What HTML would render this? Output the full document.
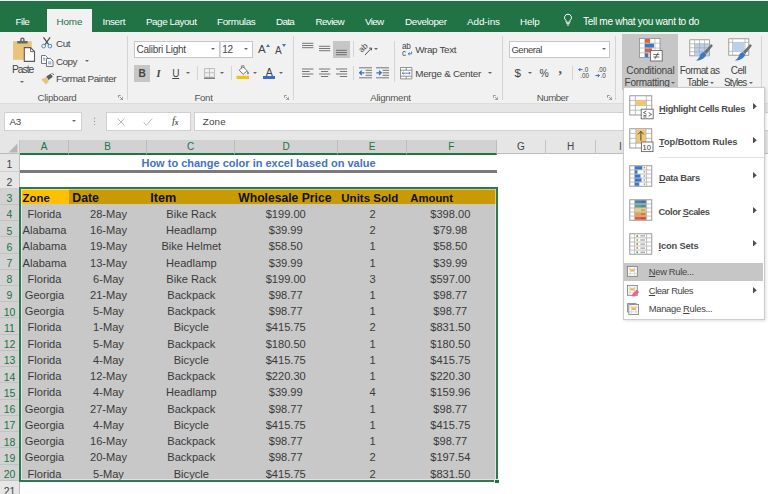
<!DOCTYPE html>
<html>
<head>
<meta charset="utf-8">
<title>Excel - Conditional Formatting</title>
<style>
*{box-sizing:border-box;margin:0;padding:0}
html,body{width:768px;height:494px;overflow:hidden;background:#fff}
body{position:relative;font-family:"Liberation Sans",sans-serif;color:#444}
.a{position:absolute}
.t{position:absolute;white-space:nowrap;line-height:1}
/* top bar */
#top{left:0;top:0;width:768px;height:32.5px;background:#217346}
#top .tab{position:absolute;top:15.5px;font-size:9.9px;letter-spacing:-0.36px;color:#fff;white-space:nowrap;line-height:11px;transform:translateX(-50%)}
#hometab{left:47px;top:9px;width:45px;height:24px;background:#f1f1f1}
/* ribbon */
#ribbon{left:0;top:32px;width:768px;height:71px;background:#f1f1f1}
.rt{position:absolute;white-space:nowrap;font-size:9.9px;letter-spacing:-0.36px;line-height:11.8px;color:#444}
.rtc{transform:translateX(-50%)}
.vsep{position:absolute;width:1px;background:#d4d4d4}
.glabel{position:absolute;top:92px;font-size:9.7px;letter-spacing:-0.36px;line-height:11px;color:#555;white-space:nowrap;transform:translateX(-50%)}
.dd{position:absolute;width:0;height:0;border-left:2.5px solid transparent;border-right:2.5px solid transparent;border-top:2.5px solid #666}
.box{position:absolute;background:#fff;border:1px solid #c8c8c8}
.launch{position:absolute;width:5.3px;height:5.3px;top:94px}
/* formula bar */
#fbar{left:0;top:103px;width:768px;height:37px;background:#e6e6e6}
/* grid */
.ch{position:absolute;top:140px;height:14px;background:#e6e6e6;border-right:1px solid #c4c4c4;border-bottom:1px solid #bdbdbd;font-size:10px;line-height:14.6px;text-align:center;color:#444}
.ch.sel{background:#d2d2d2;color:#217346;border-bottom:2px solid #217346;height:14.6px;border-right:1px solid #bcbcbc}
.rh{position:absolute;left:0;width:20px;background:#e6e6e6;border-bottom:1px solid #cfcfcf;border-right:1px solid #bdbdbd;font-size:10.5px;text-align:center;color:#444;display:flex;align-items:center;justify-content:center;line-height:1;padding-top:4.2px}
.rh.sel{background:#d2d2d2;color:#217346;border-right:1.5px solid #217346;border-bottom:1px solid #c2c2c2}
.c{position:absolute;height:16.2px;line-height:18.2px;font-size:11.1px;text-align:center;color:#3a3a3a;white-space:nowrap}
.h{position:absolute;height:16.2px;line-height:18.4px;font-size:12.1px;font-weight:bold;color:#111;white-space:nowrap}
/* menu */
#menu{left:622.6px;top:87.4px;width:142px;height:232.4px;background:#fff;border:1px solid #cbcbcb;box-shadow:1px 1px 3px rgba(0,0,0,.13)}
.mi{position:absolute;left:35px;font-size:9.3px;font-weight:bold;color:#4c4c4c;white-space:nowrap;line-height:11px}
.ms{position:absolute;left:25px;font-size:9.4px;color:#444;white-space:nowrap;line-height:11px}
.arr{position:absolute;width:0;height:0;border-top:2.8px solid transparent;border-bottom:2.8px solid transparent;border-left:3.4px solid #444}
u{text-decoration:underline;text-underline-offset:1px}
</style>
</head>
<body>
<!-- ===== TOP BAR ===== -->
<div id="top" class="a">
  <div class="a" style="left:0;top:0;width:768px;height:1.4px;background:#f2f5f2"></div>
  <div id="hometab" class="a"></div>
  <div class="tab" style="left:22.4px;letter-spacing:-0.581px">File</div>
  <div class="tab" style="left:69.4px;color:#217346;letter-spacing:-0.187px">Home</div>
  <div class="tab" style="left:113.8px;letter-spacing:-0.384px">Insert</div>
  <div class="tab" style="left:171.2px;letter-spacing:-0.451px">Page Layout</div>
  <div class="tab" style="left:236.2px;letter-spacing:-0.333px">Formulas</div>
  <div class="tab" style="left:285px;letter-spacing:-0.715px">Data</div>
  <div class="tab" style="left:329.8px;letter-spacing:-0.646px">Review</div>
  <div class="tab" style="left:374.2px;letter-spacing:-0.684px">View</div>
  <div class="tab" style="left:425.8px;letter-spacing:-0.391px">Developer</div>
  <div class="tab" style="left:483.5px;letter-spacing:-0.070px">Add-ins</div>
  <div class="tab" style="left:529.8px;letter-spacing:-0.204px">Help</div>
  <svg class="a" style="left:563px;top:13px" width="10" height="14" viewBox="0 0 10 14"><path d="M5 1.2a3.4 3.4 0 0 0-2 6.2v1.8h4V7.4a3.4 3.4 0 0 0-2-6.2z" fill="none" stroke="#fff" stroke-width="1"/><path d="M3.4 10.6h3.2M3.8 12h2.4" stroke="#fff" stroke-width="0.9"/></svg>
  <div class="tab" style="left:641px;font-size:10.1px;letter-spacing:-0.317px">Tell me what you want to do</div>
</div>

<!-- ===== RIBBON ===== -->
<div id="ribbon" class="a">
  <!-- Clipboard group (coords relative to ribbon top=32) -->
  <svg class="a" style="left:11px;top:5px" width="26" height="26" viewBox="0 0 26 26">
    <rect x="2" y="4.2" width="18.8" height="18.6" fill="#eac47c"/>
    <path d="M6.2 6.6V4h2.9V2.9a2.3 2.3 0 0 1 4.6 0V4h2.9v2.6z" fill="#666"/>
    <circle cx="11.4" cy="3" r="0.9" fill="#f1f1f1"/>
    <path d="M13.3 10.6h6.2l4 4V24.4h-10.2z" fill="#fff" stroke="#5c5c5c" stroke-width="1.1"/>
    <path d="M19.5 10.6v4h4" fill="none" stroke="#5c5c5c" stroke-width="0.9"/>
  </svg>
  <div class="rt rtc" style="left:22.6px;top:32.2px;font-size:10.3px;letter-spacing:-1.026px">Paste</div>
  <div class="dd" style="left:19.5px;top:49px"></div>
  <!-- cut -->
  <svg class="a" style="left:41.3px;top:5px" width="11.6" height="11.6" viewBox="0 0 13 13">
    <path d="M2.8 0.4L8.6 8.6M10.2 0.4L4.4 8.6" stroke="#4c4c4c" stroke-width="1.35" fill="none"/>
    <circle cx="3" cy="10.2" r="2.1" fill="none" stroke="#4a86cc" stroke-width="1.1"/>
    <circle cx="10" cy="10.2" r="2.1" fill="none" stroke="#4a86cc" stroke-width="1.1"/>
  </svg>
  <div class="rt" style="left:56px;top:5.5px;letter-spacing:-0.459px">Cut</div>
  <!-- copy -->
  <svg class="a" style="left:40.5px;top:23px" width="13" height="12" viewBox="0 0 13 12">
    <path d="M0.5 0.5h4l2 2v6h-6z" fill="#fff" stroke="#666" stroke-width="0.9"/>
    <path d="M2 3.3h2.4M2 5h2.4" stroke="#3c78c2" stroke-width="0.8"/>
    <path d="M5.5 3.5h4l2.5 2.5v5.5h-6.5z" fill="#fff" stroke="#666" stroke-width="0.9"/>
    <path d="M7 7h3.4M7 8.8h3.4" stroke="#3c78c2" stroke-width="0.8"/>
  </svg>
  <div class="rt" style="left:56px;top:24px;letter-spacing:-0.516px">Copy</div>
  <div class="dd" style="left:84.7px;top:27.5px"></div>
  <!-- format painter -->
  <svg class="a" style="left:41px;top:40.5px" width="13" height="12" viewBox="0 0 13 12">
    <path d="M0.2 6.4L5 4l3 4.2L5 11.4z" fill="#eac47c"/>
    <path d="M5.2 3.6L9.6 0.8l2.2 3L7.6 7z" fill="#5a5a5a"/>
    <path d="M10.4 0.4l1.6-0.4M11.8 1.8l1.2-0.6" stroke="#5a5a5a" stroke-width="0.9" fill="none"/>
  </svg>
  <div class="rt" style="left:56px;top:41px;letter-spacing:-0.366px">Format Painter</div>
  <div class="glabel" style="left:57px;top:59.5px;letter-spacing:-0.286px">Clipboard</div>
  <svg class="launch" style="left:118px;top:62.5px" viewBox="0 0 6 6"><path d="M0.5 3V0.5H3M5.5 2v3.5H2M2.5 2.5l2.5 2.5" fill="none" stroke="#777" stroke-width="0.9"/></svg>
  <div class="vsep" style="left:127px;top:4px;height:64px"></div>

  <!-- Font group -->
  <div class="box" style="left:134px;top:9px;width:86px;height:17px"></div>
  <div class="box" style="left:220px;top:9px;width:33px;height:17px;border-left-color:#d8d8d8"></div>
  <div class="rt" style="left:136.5px;top:12px;font-size:10.00px;letter-spacing:-0.270px">Calibri Light</div>
  <div class="dd" style="left:211px;top:16px"></div>
  <div class="rt" style="left:222.3px;top:12px;font-size:10.00px">12</div>
  <div class="dd" style="left:244.2px;top:16px"></div>
  <div class="rt" style="left:258px;top:10.5px;font-size:11.5px;line-height:13px">A</div>
  <svg class="a" style="left:265.5px;top:11.5px" width="4" height="3" viewBox="0 0 4 3"><path d="M0 3L2 0L4 3z" fill="#3c78c2"/></svg>
  <div class="rt" style="left:275px;top:12px;font-size:10px;line-height:13px">A</div>
  <svg class="a" style="left:281.5px;top:11.5px" width="4" height="3" viewBox="0 0 4 3"><path d="M0 0L2 3L4 0z" fill="#3c78c2"/></svg>
  <div class="a" style="left:133.6px;top:32.5px;width:16.8px;height:17.2px;background:#c6c6c6"></div>
  <div class="rt rtc" style="left:142px;top:36px;font-weight:bold;font-size:10.11px">B</div>
  <div class="rt rtc" style="left:158.3px;top:36px;font-style:italic;font-size:10.32px;font-family:'Liberation Serif',serif;font-weight:bold">I</div>
  <div class="rt rtc" style="left:175.7px;top:36px;font-size:10.11px;text-decoration:underline;text-underline-offset:1.2px">U</div>
  <div class="dd" style="left:186.4px;top:40px"></div>
  <div class="vsep" style="left:197px;top:33.6px;height:14.5px"></div>
  <svg class="a" style="left:204px;top:35.5px" width="11" height="11" viewBox="0 0 11 11">
    <path d="M0.5 0.5h10v8.5h-10zM5.5 0.5v8.5M0.5 4.8h10" fill="none" stroke="#b9b9b9" stroke-width="0.9"/>
    <path d="M0 10.2h11" stroke="#555" stroke-width="1.1"/>
  </svg>
  <div class="dd" style="left:220px;top:40px"></div>
  <div class="vsep" style="left:230.6px;top:33.6px;height:14.5px"></div>
  <svg class="a" style="left:236px;top:33px" width="15" height="15" viewBox="0 0 15 15">
    <rect x="0.6" y="10.8" width="12.4" height="3.2" fill="#f5c211"/>
    <path d="M3.2 5.2L7 1.6l4 4.2-3.8 3.6z" fill="#fff" stroke="#666" stroke-width="0.9"/>
    <path d="M5.4 3.6V1.4a1.3 1.3 0 0 1 2.6 0v1.4" fill="none" stroke="#666" stroke-width="0.8"/>
    <path d="M11.4 5.4c1 1.4 1.8 2.4 1.4 3.4-0.4 0.8-1.6 0.6-1.6-0.4z" fill="#3c78c2"/>
  </svg>
  <div class="dd" style="left:253.2px;top:40px"></div>
  <div class="rt rtc" style="left:269.2px;top:33.5px;font-size:10.6px;line-height:12px">A</div>
  <div class="a" style="left:263px;top:43.8px;width:12px;height:3.2px;background:#3a6fc4"></div>
  <div class="dd" style="left:279.4px;top:40px"></div>
  <div class="glabel" style="left:203.5px;top:59.5px">Font</div>
  <svg class="launch" style="left:283.5px;top:62.5px" viewBox="0 0 6 6"><path d="M0.5 3V0.5H3M5.5 2v3.5H2M2.5 2.5l2.5 2.5" fill="none" stroke="#777" stroke-width="0.9"/></svg>
  <div class="vsep" style="left:292.6px;top:4px;height:64px"></div>

  <!-- Alignment group -->
  <svg class="a" style="left:302px;top:10px" width="12" height="8" viewBox="0 0 12 8"><path d="M0 1.3h11.4M0 3.5h11.4M0 5.7h11.4" stroke="#666" stroke-width="0.9"/></svg>
  <svg class="a" style="left:319px;top:13.4px" width="12" height="8" viewBox="0 0 12 8"><path d="M0 1.3h11.2M0 3.5h11.2M0 5.7h11.2" stroke="#666" stroke-width="0.9"/></svg>
  <div class="a" style="left:333px;top:8.6px;width:17.2px;height:17.6px;background:#c6c6c6"></div>
  <svg class="a" style="left:336.2px;top:17.2px" width="12" height="8" viewBox="0 0 12 8"><path d="M0 1.3h10.8M0 3.5h10.8M0 5.7h10.8" stroke="#666" stroke-width="0.9"/></svg>
  <div class="vsep" style="left:352.8px;top:9px;height:16px"></div>
  <svg class="a" style="left:358.6px;top:8.6px" width="15" height="15" viewBox="0 0 15 15">
    <text x="0" y="0" font-family="Liberation Sans, sans-serif" font-size="8.4" fill="#444" transform="translate(2.7 12) rotate(-45)">ab</text>
    <path d="M6 14L12.6 7M12.6 7l-2.4 0.2M12.6 7l-0.2 2.4" stroke="#555" stroke-width="1" fill="none"/>
  </svg>
  <div class="dd" style="left:374.3px;top:16px"></div>
  <svg class="a" style="left:302px;top:36px" width="12" height="10" viewBox="0 0 12 10"><path d="M0 1h11.4M0 3.5h7.6M0 6h11.4M0 8.5h7.6" stroke="#666" stroke-width="0.9"/></svg>
  <svg class="a" style="left:319px;top:36px" width="12" height="10" viewBox="0 0 12 10"><path d="M0 1h11.2M2 3.5h7.2M0 6h11.2M2 8.5h7.2" stroke="#666" stroke-width="0.9"/></svg>
  <svg class="a" style="left:336px;top:36px" width="12" height="10" viewBox="0 0 12 10"><path d="M0 1h11.2M3.8 3.5h7.4M0 6h11.2M3.8 8.5h7.4" stroke="#666" stroke-width="0.9"/></svg>
  <div class="vsep" style="left:352.8px;top:33.6px;height:14.5px"></div>
  <svg class="a" style="left:359px;top:35px" width="14" height="12" viewBox="0 0 14 12">
    <path d="M0 0.8h13M6.6 3.3h6.4M6.6 5.8h6.4M6.6 8.3h6.4M0 10.8h13" stroke="#666" stroke-width="0.9"/>
    <path d="M5.4 5.8H0.8M2.8 3.6L0.6 5.8l2.2 2.2" stroke="#2f6fbe" stroke-width="1.2" fill="none"/>
  </svg>
  <svg class="a" style="left:376px;top:35px" width="14" height="12" viewBox="0 0 14 12">
    <path d="M0 0.8h13M6.6 3.3h6.4M6.6 5.8h6.4M6.6 8.3h6.4M0 10.8h13" stroke="#666" stroke-width="0.9"/>
    <path d="M0.4 5.8H5M3 3.6l2.2 2.2L3 8" stroke="#2f6fbe" stroke-width="1.2" fill="none"/>
  </svg>
  <div class="vsep" style="left:394.4px;top:8.5px;height:41px"></div>
  <!-- wrap text -->
  <svg class="a" style="left:402.2px;top:10.5px" width="12" height="14" viewBox="0 0 12 14">
    <text x="0" y="6.4" font-family="Liberation Sans, sans-serif" font-size="8.2" fill="#444" letter-spacing="-0.3">ab</text>
    <text x="0" y="12.8" font-family="Liberation Sans, sans-serif" font-size="8.2" fill="#444">c</text>
    <path d="M9.6 8.6v2.2H6.2M7.6 9.6L6.2 10.8l1.4 1.2" stroke="#2f6fbe" stroke-width="0.9" fill="none"/>
  </svg>
  <div class="rt" style="left:415.2px;top:12px;letter-spacing:-0.344px">Wrap Text</div>
  <svg class="a" style="left:400px;top:34.5px" width="13" height="13" viewBox="0 0 13 13">
    <path d="M0.5 0.5h11.4v11.4H0.5zM0.5 3.2h11.4M0.5 9.2h11.4M6.2 0.5v2.7M6.2 9.2v2.7" fill="#fff" stroke="#858585" stroke-width="0.9"/>
    <path d="M2.2 6.2h8M3.6 4.9L2.2 6.2l1.4 1.3M8.8 4.9l1.4 1.3-1.4 1.3" stroke="#2f6fbe" stroke-width="0.8" fill="none"/>
  </svg>
  <div class="rt" style="left:415.2px;top:36px;letter-spacing:-0.279px">Merge &amp; Center</div>
  <div class="dd" style="left:488.4px;top:40px"></div>
  <div class="glabel" style="left:390.5px;top:59.5px;letter-spacing:-0.309px">Alignment</div>
  <svg class="launch" style="left:493px;top:62.5px" viewBox="0 0 6 6"><path d="M0.5 3V0.5H3M5.5 2v3.5H2M2.5 2.5l2.5 2.5" fill="none" stroke="#777" stroke-width="0.9"/></svg>
  <div class="vsep" style="left:502.4px;top:4px;height:64px"></div>

  <!-- Number group -->
  <div class="box" style="left:508.6px;top:9px;width:101.4px;height:17px"></div>
  <div class="rt" style="left:511.4px;top:12px;font-size:9.57px;letter-spacing:-0.503px">General</div>
  <div class="dd" style="left:601.9px;top:16px"></div>
  <div class="rt rtc" style="left:517.6px;top:34px;font-size:11.6px;line-height:13px">$</div>
  <div class="dd" style="left:527.6px;top:40px"></div>
  <div class="rt rtc" style="left:544px;top:34.5px;font-size:10.4px;line-height:13px">%</div>
  <div class="rt rtc" style="left:560px;top:29.5px;font-size:14px;line-height:14px;font-weight:bold;font-family:'Liberation Serif',serif;color:#555">,</div>
  <div class="vsep" style="left:572.4px;top:33.6px;height:14.5px"></div>
  <svg class="a" style="left:578px;top:35px" width="12" height="12" viewBox="0 0 12 12">
    <path d="M4.6 2.6H0.8M2.4 1L0.8 2.6l1.6 1.6" stroke="#2f6fbe" stroke-width="1" fill="none"/>
    <text x="5" y="5" font-family="Liberation Sans, sans-serif" font-size="6.3" fill="#444">.0</text>
    <text x="2.2" y="10.6" font-family="Liberation Sans, sans-serif" font-size="6.3" fill="#444">.00</text>
  </svg>
  <svg class="a" style="left:595px;top:35px" width="12" height="12" viewBox="0 0 12 12">
    <text x="2.4" y="5" font-family="Liberation Sans, sans-serif" font-size="6.3" fill="#444">.00</text>
    <path d="M0.4 8.6H4.4M2.8 7L4.4 8.6 2.8 10.2" stroke="#2f6fbe" stroke-width="1" fill="none"/>
    <text x="5.6" y="10.6" font-family="Liberation Sans, sans-serif" font-size="6.3" fill="#444">.0</text>
  </svg>
  <div class="glabel" style="left:552.5px;top:59.5px;letter-spacing:-0.526px">Number</div>
  <svg class="launch" style="left:607px;top:62.5px" viewBox="0 0 6 6"><path d="M0.5 3V0.5H3M5.5 2v3.5H2M2.5 2.5l2.5 2.5" fill="none" stroke="#777" stroke-width="0.9"/></svg>
  <div class="vsep" style="left:614.6px;top:4px;height:64px"></div>

  <!-- Styles group -->
  <div class="a" style="left:622.2px;top:2.4px;width:55.6px;height:55.6px;background:#c6c6c6"></div>
  <svg class="a" style="left:639px;top:6px" width="25" height="24" viewBox="0 0 25 24">
    <rect x="0.5" y="0.5" width="20.5" height="19" fill="#fff" stroke="#8a8a8a" stroke-width="0.8"/>
    <path d="M0.5 5.2h20.5M0.5 10h20.5M0.5 14.8h20.5M5.6 0.5v19M10.8 0.5v19M16 0.5v19" stroke="#b0b0b0" stroke-width="0.7" fill="none"/>
    <rect x="6" y="1" width="5" height="3.8" fill="#e0603a"/>
    <rect x="6" y="5.6" width="9" height="4" fill="#3c78c2"/>
    <rect x="6" y="10.4" width="7" height="4" fill="#e0603a"/>
    <rect x="6" y="15.2" width="3.4" height="4" fill="#3c78c2"/>
    <rect x="11.6" y="12.6" width="11.6" height="10.4" fill="#fff" stroke="#666" stroke-width="0.9"/>
    <path d="M14.4 16.6h6M14.4 19h6M19.2 14.6l-3.4 6.6" stroke="#444" stroke-width="0.8" fill="none"/>
  </svg>
  <div class="rt rtc" style="left:650.4px;top:32.7px;font-size:10.11px;letter-spacing:-0.219px">Conditional</div>
  <div class="rt" style="left:624.6px;top:44.9px;font-size:10.00px;letter-spacing:-0.290px">Formatting</div>
  <div class="dd" style="left:671px;top:49.6px"></div>
  <svg class="a" style="left:688.5px;top:7px" width="27" height="24" viewBox="0 0 27 24">
    <rect x="0.8" y="0.8" width="19.6" height="16" fill="#fff" stroke="#8a8a8a" stroke-width="0.8"/>
    <rect x="5.6" y="4.8" width="14.6" height="11.8" fill="#b9d0ec"/>
    <path d="M0.8 4.8h19.6M0.8 8.8h19.6M0.8 12.8h19.6M5.6 0.8v16M10.6 0.8v16M15.6 0.8v16" stroke="#a8a8a8" stroke-width="0.7" fill="none"/>
    <path d="M22.2 5l1.7 1.7-6.7 8.3-2.4-2z" fill="#707070"/>
    <path d="M14.6 13l2.6 2.4c-0.6 3-3.6 5.6-10.4 6.2 2.4-1.6 3.4-3 4.2-5.2 0.6-1.8 2-3 3.6-3.4z" fill="#3c78c2"/>
  </svg>
  <div class="rt rtc" style="left:699.5px;top:32.7px;font-size:10.00px;letter-spacing:-0.602px">Format as</div>
  <div class="rt" style="left:686.8px;top:44.9px;font-size:10.00px;letter-spacing:-0.522px">Table</div>
  <div class="dd" style="left:710px;top:49.6px"></div>
  <svg class="a" style="left:727.5px;top:6px" width="27" height="25" viewBox="0 0 27 25">
    <rect x="0.8" y="0.8" width="20" height="16.4" fill="#fff" stroke="#8a8a8a" stroke-width="0.8"/>
    <path d="M0.8 4.4h20M0.8 13.4h20M4.6 0.8v16.4M17 0.8v16.4" stroke="#a8a8a8" stroke-width="0.7" fill="none"/>
    <rect x="5" y="4.8" width="11.6" height="8.2" fill="#b9d0ec"/>
    <path d="M22.2 6l1.7 1.7-6.7 8.3-2.4-2z" fill="#707070"/>
    <path d="M14.6 14l2.6 2.4c-0.6 3-3.6 5.6-10.4 6.2 2.4-1.6 3.4-3 4.2-5.2 0.6-1.8 2-3 3.6-3.4z" fill="#3c78c2"/>
  </svg>
  <div class="rt rtc" style="left:738.4px;top:32.7px;font-size:10.00px;letter-spacing:-0.509px">Cell</div>
  <div class="rt" style="left:723.9px;top:44.9px;font-size:10.00px;letter-spacing:-0.756px">Styles</div>
  <div class="dd" style="left:748.6px;top:49.6px"></div>
  <div class="vsep" style="left:761.2px;top:4px;height:52px"></div>

</div>

<!-- ===== FORMULA BAR ===== -->
<div id="fbar" class="a">
  <!-- coords relative to fbar top=103 -->
  <div class="a" style="left:0;top:0;width:768px;height:1px;background:#dcdcdc"></div>
  <div class="box" style="left:3.8px;top:8.8px;width:78.6px;height:19.6px;border-color:#d0d0d0"></div>
  <div class="rt" style="left:9.4px;top:12.7px;font-size:9.8px;letter-spacing:-0.068px">A3</div>
  <div class="dd" style="left:72px;top:17px"></div>
  <svg class="a" style="left:93px;top:14px" width="3" height="9" viewBox="0 0 3 9"><circle cx="1.5" cy="1.2" r="0.7" fill="#999"/><circle cx="1.5" cy="4.4" r="0.7" fill="#999"/><circle cx="1.5" cy="7.6" r="0.7" fill="#999"/></svg>
  <div class="box" style="left:106.2px;top:8.8px;width:84.6px;height:19.6px;border-color:#d0d0d0"></div>
  <svg class="a" style="left:116.5px;top:14.5px" width="8" height="8" viewBox="0 0 8 8"><path d="M0.6 0.6l6.8 6.8M7.4 0.6L0.6 7.4" stroke="#b0b0b0" stroke-width="0.9"/></svg>
  <svg class="a" style="left:143px;top:14.5px" width="10" height="8" viewBox="0 0 10 8"><path d="M0.6 4.6l2.8 2.6L9.2 0.6" stroke="#b0b0b0" stroke-width="0.9" fill="none"/></svg>
  <div class="rt" style="left:172px;top:11px;font-size:11px;font-style:italic;font-family:'Liberation Serif',serif;color:#4a4a4a;line-height:12px">f<span style="font-size:7.6px;font-weight:bold;position:relative;top:0.6px">x</span></div>
  <div class="box" style="left:193.6px;top:8.8px;width:580px;height:19.6px;border-color:#d0d0d0"></div>
  <div class="rt" style="left:202.8px;top:12.7px;font-size:9.9px;letter-spacing:0.120px">Zone</div>

</div>

<!-- ===== GRID ===== -->
<div id="grid" class="a" style="left:0;top:0;width:768px;height:494px;pointer-events:none">
  <!-- corner -->
  <div class="a" style="left:0;top:140px;width:20px;height:14px;background:#e6e6e6;border-right:1px solid #c4c4c4;border-bottom:1px solid #bdbdbd"></div>
  <svg class="a" style="left:8px;top:143px" width="10" height="10" viewBox="0 0 10 10"><path d="M9.5 0.5V9.5H0.5z" fill="#b5b5b5"/></svg>
  <div class="a" style="left:646px;top:140px;width:122px;height:14px;background:#e6e6e6;border-bottom:1px solid #bdbdbd"></div>
<div class="ch sel" style="left:20px;width:49px">A</div>
<div class="ch sel" style="left:69px;width:78px">B</div>
<div class="ch sel" style="left:147px;width:88px">C</div>
<div class="ch sel" style="left:235px;width:103px">D</div>
<div class="ch sel" style="left:338px;width:69px">E</div>
<div class="ch sel" style="left:407px;width:89.60000000000002px">F</div>
<div class="ch" style="left:496.6px;width:49.39999999999998px">G</div>
<div class="ch" style="left:546px;width:50px">H</div>
<div class="ch" style="left:596px;width:50px">I</div>
<div class="rh" style="top:154px;height:18px">1</div>
<div class="rh" style="top:172px;height:16.6px">2</div>
<div class="rh sel" style="top:188.60px;height:16.235px">3</div>
<div class="rh sel" style="top:204.83px;height:16.235px">4</div>
<div class="rh sel" style="top:221.07px;height:16.235px">5</div>
<div class="rh sel" style="top:237.31px;height:16.235px">6</div>
<div class="rh sel" style="top:253.54px;height:16.235px">7</div>
<div class="rh sel" style="top:269.77px;height:16.235px">8</div>
<div class="rh sel" style="top:286.01px;height:16.235px">9</div>
<div class="rh sel" style="top:302.25px;height:16.235px">10</div>
<div class="rh sel" style="top:318.48px;height:16.235px">11</div>
<div class="rh sel" style="top:334.72px;height:16.235px">12</div>
<div class="rh sel" style="top:350.95px;height:16.235px">13</div>
<div class="rh sel" style="top:367.18px;height:16.235px">14</div>
<div class="rh sel" style="top:383.42px;height:16.235px">15</div>
<div class="rh sel" style="top:399.65px;height:16.235px">16</div>
<div class="rh sel" style="top:415.89px;height:16.235px">17</div>
<div class="rh sel" style="top:432.12px;height:16.235px">18</div>
<div class="rh sel" style="top:448.36px;height:16.235px">19</div>
<div class="rh sel" style="top:464.60px;height:16.235px">20</div>
<div class="rh" style="top:481.43px;height:16.235px">21</div>
  <!-- title row -->
  <div class="t" style="left:20px;top:154px;width:476px;height:17px;line-height:19.6px;text-align:center;font-size:11px;font-weight:bold;color:#4472c4;padding-left:1px">How to change color in excel based on value</div>
  <div class="a" style="left:20px;top:170.2px;width:477px;height:2.6px;background:#7a7a7a"></div>
  <!-- selection fill -->
  <div class="a" style="left:20.4px;top:188.6px;width:475.4px;height:291.2px;background:#c8c8c8"></div>
  <div class="a" style="left:20.4px;top:188.6px;width:475.4px;height:15.8px;background:#c89a04"></div>
  <div class="a" style="left:20.4px;top:188.6px;width:48.6px;height:15.8px;background:#ffc000"></div>
<div class="h" style="left:22.6px;top:188.60px;width:46.4px;font-size:11.4px">Zone</div>
<div class="h" style="left:72.3px;top:188.60px;width:74.7px;font-size:12.3px">Date</div>
<div class="h" style="left:150.3px;top:188.60px;width:84.7px;font-size:12.6px">Item</div>
<div class="h" style="left:238.3px;top:188.60px;width:99.7px;font-size:12.15px">Wholesale Price</div>
<div class="h" style="left:341.3px;top:188.60px;width:65.7px;font-size:11.5px">Units Sold</div>
<div class="h" style="left:410.3px;top:188.60px;width:86.30000000000003px;font-size:11.3px">Amount</div>
<div class="c" style="left:20px;top:204.83px;width:49px">Florida</div>
<div class="c" style="left:69.5px;top:204.83px;width:78px">28-May</div>
<div class="c" style="left:147.3px;top:204.83px;width:88px">Bike Rack</div>
<div class="c" style="left:234.2px;top:204.83px;width:103px">$199.00</div>
<div class="c" style="left:338px;top:204.83px;width:69px">2</div>
<div class="c" style="left:405.5px;top:204.83px;width:89.60000000000002px">$398.00</div>
<div class="c" style="left:20px;top:221.07px;width:49px">Alabama</div>
<div class="c" style="left:69.5px;top:221.07px;width:78px">16-May</div>
<div class="c" style="left:147.3px;top:221.07px;width:88px">Headlamp</div>
<div class="c" style="left:234.2px;top:221.07px;width:103px">$39.99</div>
<div class="c" style="left:338px;top:221.07px;width:69px">2</div>
<div class="c" style="left:405.5px;top:221.07px;width:89.60000000000002px">$79.98</div>
<div class="c" style="left:20px;top:237.31px;width:49px">Alabama</div>
<div class="c" style="left:69.5px;top:237.31px;width:78px">19-May</div>
<div class="c" style="left:147.3px;top:237.31px;width:88px">Bike Helmet</div>
<div class="c" style="left:234.2px;top:237.31px;width:103px">$58.50</div>
<div class="c" style="left:338px;top:237.31px;width:69px">1</div>
<div class="c" style="left:405.5px;top:237.31px;width:89.60000000000002px">$58.50</div>
<div class="c" style="left:20px;top:253.54px;width:49px">Alabama</div>
<div class="c" style="left:69.5px;top:253.54px;width:78px">13-May</div>
<div class="c" style="left:147.3px;top:253.54px;width:88px">Headlamp</div>
<div class="c" style="left:234.2px;top:253.54px;width:103px">$39.99</div>
<div class="c" style="left:338px;top:253.54px;width:69px">1</div>
<div class="c" style="left:405.5px;top:253.54px;width:89.60000000000002px">$39.99</div>
<div class="c" style="left:20px;top:269.77px;width:49px">Florida</div>
<div class="c" style="left:69.5px;top:269.77px;width:78px">6-May</div>
<div class="c" style="left:147.3px;top:269.77px;width:88px">Bike Rack</div>
<div class="c" style="left:234.2px;top:269.77px;width:103px">$199.00</div>
<div class="c" style="left:338px;top:269.77px;width:69px">3</div>
<div class="c" style="left:405.5px;top:269.77px;width:89.60000000000002px">$597.00</div>
<div class="c" style="left:20px;top:286.01px;width:49px">Georgia</div>
<div class="c" style="left:69.5px;top:286.01px;width:78px">21-May</div>
<div class="c" style="left:147.3px;top:286.01px;width:88px">Backpack</div>
<div class="c" style="left:234.2px;top:286.01px;width:103px">$98.77</div>
<div class="c" style="left:338px;top:286.01px;width:69px">1</div>
<div class="c" style="left:405.5px;top:286.01px;width:89.60000000000002px">$98.77</div>
<div class="c" style="left:20px;top:302.25px;width:49px">Georgia</div>
<div class="c" style="left:69.5px;top:302.25px;width:78px">5-May</div>
<div class="c" style="left:147.3px;top:302.25px;width:88px">Backpack</div>
<div class="c" style="left:234.2px;top:302.25px;width:103px">$98.77</div>
<div class="c" style="left:338px;top:302.25px;width:69px">1</div>
<div class="c" style="left:405.5px;top:302.25px;width:89.60000000000002px">$98.77</div>
<div class="c" style="left:20px;top:318.48px;width:49px">Florida</div>
<div class="c" style="left:69.5px;top:318.48px;width:78px">1-May</div>
<div class="c" style="left:147.3px;top:318.48px;width:88px">Bicycle</div>
<div class="c" style="left:234.2px;top:318.48px;width:103px">$415.75</div>
<div class="c" style="left:338px;top:318.48px;width:69px">2</div>
<div class="c" style="left:405.5px;top:318.48px;width:89.60000000000002px">$831.50</div>
<div class="c" style="left:20px;top:334.72px;width:49px">Florida</div>
<div class="c" style="left:69.5px;top:334.72px;width:78px">5-May</div>
<div class="c" style="left:147.3px;top:334.72px;width:88px">Backpack</div>
<div class="c" style="left:234.2px;top:334.72px;width:103px">$180.50</div>
<div class="c" style="left:338px;top:334.72px;width:69px">1</div>
<div class="c" style="left:405.5px;top:334.72px;width:89.60000000000002px">$180.50</div>
<div class="c" style="left:20px;top:350.95px;width:49px">Florida</div>
<div class="c" style="left:69.5px;top:350.95px;width:78px">4-May</div>
<div class="c" style="left:147.3px;top:350.95px;width:88px">Bicycle</div>
<div class="c" style="left:234.2px;top:350.95px;width:103px">$415.75</div>
<div class="c" style="left:338px;top:350.95px;width:69px">1</div>
<div class="c" style="left:405.5px;top:350.95px;width:89.60000000000002px">$415.75</div>
<div class="c" style="left:20px;top:367.18px;width:49px">Florida</div>
<div class="c" style="left:69.5px;top:367.18px;width:78px">12-May</div>
<div class="c" style="left:147.3px;top:367.18px;width:88px">Backpack</div>
<div class="c" style="left:234.2px;top:367.18px;width:103px">$220.30</div>
<div class="c" style="left:338px;top:367.18px;width:69px">1</div>
<div class="c" style="left:405.5px;top:367.18px;width:89.60000000000002px">$220.30</div>
<div class="c" style="left:20px;top:383.42px;width:49px">Florida</div>
<div class="c" style="left:69.5px;top:383.42px;width:78px">4-May</div>
<div class="c" style="left:147.3px;top:383.42px;width:88px">Headlamp</div>
<div class="c" style="left:234.2px;top:383.42px;width:103px">$39.99</div>
<div class="c" style="left:338px;top:383.42px;width:69px">4</div>
<div class="c" style="left:405.5px;top:383.42px;width:89.60000000000002px">$159.96</div>
<div class="c" style="left:20px;top:399.65px;width:49px">Georgia</div>
<div class="c" style="left:69.5px;top:399.65px;width:78px">27-May</div>
<div class="c" style="left:147.3px;top:399.65px;width:88px">Backpack</div>
<div class="c" style="left:234.2px;top:399.65px;width:103px">$98.77</div>
<div class="c" style="left:338px;top:399.65px;width:69px">1</div>
<div class="c" style="left:405.5px;top:399.65px;width:89.60000000000002px">$98.77</div>
<div class="c" style="left:20px;top:415.89px;width:49px">Georgia</div>
<div class="c" style="left:69.5px;top:415.89px;width:78px">4-May</div>
<div class="c" style="left:147.3px;top:415.89px;width:88px">Bicycle</div>
<div class="c" style="left:234.2px;top:415.89px;width:103px">$415.75</div>
<div class="c" style="left:338px;top:415.89px;width:69px">1</div>
<div class="c" style="left:405.5px;top:415.89px;width:89.60000000000002px">$415.75</div>
<div class="c" style="left:20px;top:432.12px;width:49px">Georgia</div>
<div class="c" style="left:69.5px;top:432.12px;width:78px">16-May</div>
<div class="c" style="left:147.3px;top:432.12px;width:88px">Backpack</div>
<div class="c" style="left:234.2px;top:432.12px;width:103px">$98.77</div>
<div class="c" style="left:338px;top:432.12px;width:69px">1</div>
<div class="c" style="left:405.5px;top:432.12px;width:89.60000000000002px">$98.77</div>
<div class="c" style="left:20px;top:448.36px;width:49px">Georgia</div>
<div class="c" style="left:69.5px;top:448.36px;width:78px">20-May</div>
<div class="c" style="left:147.3px;top:448.36px;width:88px">Backpack</div>
<div class="c" style="left:234.2px;top:448.36px;width:103px">$98.77</div>
<div class="c" style="left:338px;top:448.36px;width:69px">2</div>
<div class="c" style="left:405.5px;top:448.36px;width:89.60000000000002px">$197.54</div>
<div class="c" style="left:20px;top:464.60px;width:49px">Florida</div>
<div class="c" style="left:69.5px;top:464.60px;width:78px">5-May</div>
<div class="c" style="left:147.3px;top:464.60px;width:88px">Bicycle</div>
<div class="c" style="left:234.2px;top:464.60px;width:103px">$415.75</div>
<div class="c" style="left:338px;top:464.60px;width:69px">2</div>
<div class="c" style="left:405.5px;top:464.60px;width:89.60000000000002px">$831.50</div>
  <!-- selection border -->
  <div class="a" style="left:18.9px;top:187.1px;width:479.2px;height:294.8px;border:2px solid #2b7a50;box-shadow:inset 0 0 0 0.8px rgba(255,255,255,.6)"></div>
  <div class="a" style="left:494.2px;top:478.5px;width:4.8px;height:4.2px;background:#217346;border:0.7px solid #e8e8e8;border-right:0;border-bottom:0"></div>
</div>

<!-- ===== MENU ===== -->
<div id="menu" class="a"></div>
<div id="menuc" class="a" style="left:0;top:0;width:768px;height:494px">
  <!-- Highlight Cells Rules -->
  <svg class="a" style="left:629px;top:94.5px" width="26" height="25" viewBox="0 0 26 25">
    <rect x="0.8" y="0.8" width="22" height="19.2" fill="#fff" stroke="#808080" stroke-width="0.8"/>
    <path d="M0.8 5.4h22M0.8 10.4h22M0.8 15.2h22M6.4 0.8v19.2M17.4 0.8v19.2" stroke="#a6a6a6" stroke-width="0.7" fill="none"/>
    <rect x="6.6" y="5.6" width="10.6" height="5" fill="#f0c66f"/>
    <rect x="12.2" y="14.2" width="12" height="9.6" fill="#fff" stroke="#666" stroke-width="0.9"/>
    <path d="M17.4 16l-3 1.6 3 1.6M14.4 20.6h3M14.4 22h3M19.6 17.6l3 1.8-3 1.8" stroke="#444" stroke-width="0.8" fill="none"/>
  </svg>
  <div class="mi" style="left:659px;top:103.8px;letter-spacing:-0.333px"><u>H</u>ighlight Cells Rules</div>
  <svg class="a" style="left:752.6px;top:102.5px" width="4" height="6.6" viewBox="0 0 4 6.6"><path d="M0 0L3.8 3.3L0 6.6z" fill="#505050"/></svg>
  <!-- Top/Bottom Rules -->
  <svg class="a" style="left:629px;top:128.4px" width="26" height="25" viewBox="0 0 26 25">
    <rect x="0.8" y="0.8" width="22" height="19.2" fill="#fff" stroke="#808080" stroke-width="0.8"/>
    <rect x="7" y="1.4" width="9.8" height="13.8" fill="#f0c66f"/>
    <path d="M0.8 5.4h6M17 5.4h5.8M0.8 10.4h6M17 10.4h5.8M0.8 15.2h22M6.8 0.8v19.2M17 0.8v19.2" stroke="#a6a6a6" stroke-width="0.7" fill="none"/>
    <path d="M11.9 12.6V3.4M9 6.4l2.9-3 2.9 3" stroke="#444" stroke-width="1" fill="none"/>
    <rect x="12.4" y="14" width="11.6" height="9.6" fill="#fff" stroke="#666" stroke-width="0.9"/>
    <text x="13.6" y="22" font-family="Liberation Sans, sans-serif" font-size="7.6" fill="#333">10</text>
  </svg>
  <div class="mi" style="left:659px;top:137.2px;letter-spacing:-0.061px"><u>T</u>op/Bottom Rules</div>
  <svg class="a" style="left:752.6px;top:136.5px" width="4" height="6.6" viewBox="0 0 4 6.6"><path d="M0 0L3.8 3.3L0 6.6z" fill="#505050"/></svg>
  <div class="a" style="left:658.6px;top:157px;width:105px;height:1px;background:#e1e1e1"></div>
  <!-- Data Bars -->
  <svg class="a" style="left:629px;top:164.6px" width="25" height="23" viewBox="0 0 25 23">
    <rect x="0.8" y="0.8" width="22" height="20.4" fill="#fff" stroke="#808080" stroke-width="0.8"/>
    <path d="M0.8 4.9h22M0.8 9h22M0.8 13h22M0.8 17.1h22M5.6 0.8v20.4M17.6 0.8v20.4" stroke="#a6a6a6" stroke-width="0.7" fill="none"/>
    <rect x="5.9" y="1.2" width="7.4" height="3.3" fill="#3c78c2"/>
    <rect x="5.9" y="5.3" width="2.6" height="3.3" fill="#3c78c2"/>
    <rect x="5.9" y="9.4" width="5.6" height="3.3" fill="#3c78c2"/>
    <rect x="5.9" y="13.4" width="6.6" height="3.3" fill="#3c78c2"/>
    <rect x="5.9" y="17.5" width="4.4" height="3.3" fill="#3c78c2"/>
    <path d="M14.6 2.8h1.6M14.6 6.9h1.6M14.6 11h1.6M14.6 15h1.6M14.6 19.1h1.6" stroke="#444" stroke-width="0.8"/>
  </svg>
  <div class="mi" style="left:659px;top:172.8px;letter-spacing:-0.291px"><u>D</u>ata Bars</div>
  <svg class="a" style="left:752.6px;top:172.1px" width="4" height="6.6" viewBox="0 0 4 6.6"><path d="M0 0L3.8 3.3L0 6.6z" fill="#505050"/></svg>
  <!-- Color Scales -->
  <svg class="a" style="left:629px;top:199px" width="25" height="23" viewBox="0 0 25 23">
    <rect x="0.8" y="0.8" width="22" height="20.4" fill="#fff" stroke="#808080" stroke-width="0.8"/>
    <rect x="5.9" y="1.2" width="11.4" height="3.5" fill="#4a7fc0"/>
    <rect x="5.9" y="5.2" width="11.4" height="3.6" fill="#5fa58c"/>
    <rect x="5.9" y="9.3" width="11.4" height="3.5" fill="#f0cf7a"/>
    <rect x="5.9" y="13.3" width="11.4" height="3.6" fill="#f09b43"/>
    <rect x="5.9" y="17.4" width="11.4" height="3.4" fill="#e0603a"/>
    <path d="M0.8 4.9h22M0.8 9h22M0.8 13h22M0.8 17.1h22M5.6 0.8v20.4M17.6 0.8v20.4" stroke="#a6a6a6" stroke-width="0.7" fill="none"/>
    <path d="M12 2.9h4M12 7h4M12 11.1h4M12 15.1h4M12 19.2h4" stroke="#444" stroke-width="0.7" opacity="0.7"/>
  </svg>
  <div class="mi" style="left:658.6px;top:206.6px;letter-spacing:-0.461px">Color <u>S</u>cales</div>
  <svg class="a" style="left:752.6px;top:206.5px" width="4" height="6.6" viewBox="0 0 4 6.6"><path d="M0 0L3.8 3.3L0 6.6z" fill="#505050"/></svg>
  <!-- Icon Sets -->
  <svg class="a" style="left:629px;top:233px" width="25" height="23" viewBox="0 0 25 23">
    <rect x="0.8" y="0.8" width="22" height="20.4" fill="#fff" stroke="#808080" stroke-width="0.8"/>
    <path d="M0.8 4.9h22M0.8 9h22M0.8 13h22M0.8 17.1h22M5.6 0.8v20.4M17.6 0.8v20.4" stroke="#a6a6a6" stroke-width="0.7" fill="none"/>
    <circle cx="8.2" cy="2.9" r="1" fill="#4aa77c"/><circle cx="8.2" cy="7" r="1" fill="#f09b43"/><circle cx="8.2" cy="11.1" r="1" fill="#4aa77c"/><circle cx="8.2" cy="15.1" r="1" fill="#f07f2a"/><circle cx="8.2" cy="19.2" r="1" fill="#4aa77c"/>
    <path d="M11.4 2.9h4.6M11.4 7h4.6M11.4 11.1h4.6M11.4 15.1h4.6M11.4 19.2h4.6" stroke="#555" stroke-width="0.7"/>
  </svg>
  <div class="mi" style="left:658.6px;top:241.4px;letter-spacing:-0.172px"><u>I</u>con Sets</div>
  <svg class="a" style="left:752.6px;top:239.9px" width="4" height="6.6" viewBox="0 0 4 6.6"><path d="M0 0L3.8 3.3L0 6.6z" fill="#505050"/></svg>
  <!-- small items -->
  <div class="a" style="left:624.2px;top:262.6px;width:138.8px;height:18.2px;background:#c6c6c6"></div>
  <svg class="a" style="left:627.4px;top:266px" width="11" height="11" viewBox="0 0 11 11">
    <rect x="0.5" y="0.5" width="9.8" height="9.8" fill="#fff" stroke="#777" stroke-width="0.8"/>
    <path d="M0.5 3h9.8M0.5 7.6h9.8M3 0.5v9.8M7.6 0.5v9.8" stroke="#c2c2c2" stroke-width="0.6"/>
    <rect x="3.3" y="3.2" width="4.2" height="2.4" fill="#f0b64c"/>
  </svg>
  <div class="ms" style="left:648.8px;top:266.2px;letter-spacing:-0.324px"><u>N</u>ew Rule...</div>
  <svg class="a" style="left:627.4px;top:284.6px" width="13" height="12" viewBox="0 0 13 12">
    <rect x="0.5" y="0.5" width="9.8" height="9.8" fill="#fff" stroke="#777" stroke-width="0.8"/>
    <path d="M0.5 3h9.8M0.5 7.6h9.8M3 0.5v9.8M7.6 0.5v9.8" stroke="#c2c2c2" stroke-width="0.6"/>
    <rect x="3.3" y="3.2" width="4.2" height="2.4" fill="#f0b64c"/>
    <path d="M9.6 4.6l2.6 2.4-4.4 4.4H5.6l-1-1.4z" fill="#e8668a"/>
  </svg>
  <div class="ms" style="left:648.8px;top:284.8px;letter-spacing:-0.427px"><u>C</u>lear Rules</div>
  <svg class="a" style="left:753.2px;top:287.1px" width="4" height="6.6" viewBox="0 0 4 6.6"><path d="M0 0L3.8 3.3L0 6.6z" fill="#505050"/></svg>
  <svg class="a" style="left:626.6px;top:302.6px" width="13" height="12" viewBox="0 0 13 12">
    <path d="M0.5 9.4V0.5h9" fill="none" stroke="#777" stroke-width="0.8"/>
    <rect x="1.8" y="1.6" width="9.8" height="9.8" fill="#fff" stroke="#777" stroke-width="0.8"/>
    <path d="M1.8 4h9.8M1.8 8.8h9.8M4.2 1.6v9.8M9 1.6v9.8" stroke="#c2c2c2" stroke-width="0.6"/>
    <rect x="4.6" y="4.4" width="4.2" height="2.6" fill="#f0b64c"/>
  </svg>
  <div class="ms" style="left:648.8px;top:303.2px;letter-spacing:-0.312px">Manage <u>R</u>ules...</div>
</div>

</body>
</html>
